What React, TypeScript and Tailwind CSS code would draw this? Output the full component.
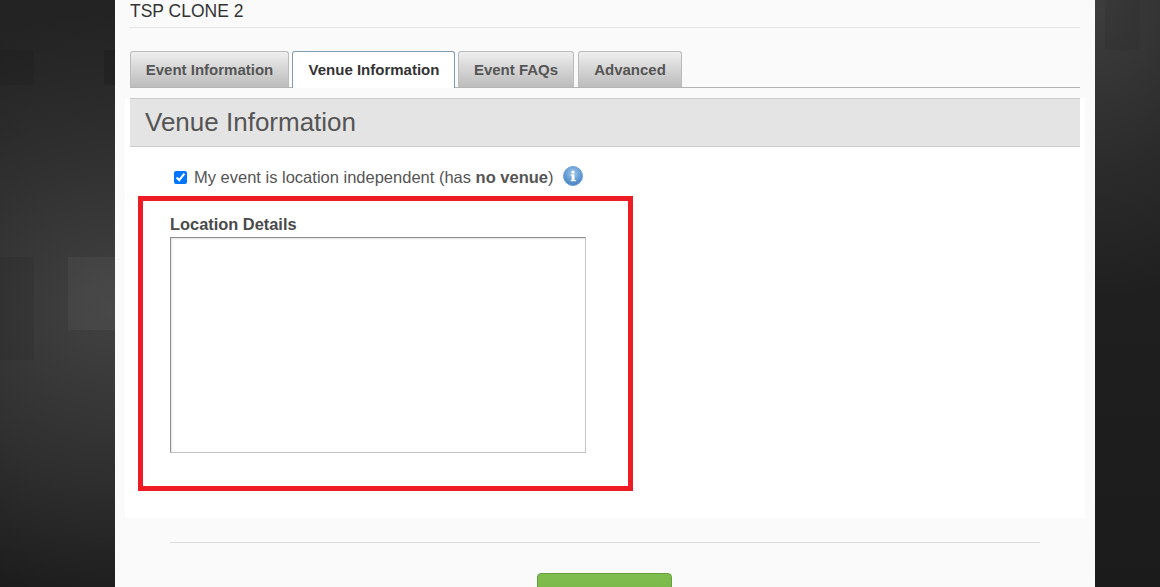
import React from 'react';

const tabs = [
  { label: 'Event Information', width: 'w-[159px]' },
  { label: 'Venue Information', width: 'w-[163px]', active: true },
  { label: 'Event FAQs', width: 'w-[116px]' },
  { label: 'Advanced', width: 'ml-[1px] w-[104px]' },
];

function InfoIcon() {
  return (
    <svg width="20" height="20" viewBox="0 0 20 20" className="block">
      <defs>
        <radialGradient id="infoBall" cx="50%" cy="35%" r="65%">
          <stop offset="0%" stopColor="#a5c9ec" />
          <stop offset="100%" stopColor="#3f80c4" />
        </radialGradient>
      </defs>
      <circle cx="10" cy="10" r="9.5" fill="url(#infoBall)" stroke="#6fa3d8" strokeWidth="1" />
      <rect x="8.7" y="8.5" width="2.8" height="6.5" fill="#fff" />
      <rect x="7.8" y="8.5" width="3" height="1.2" fill="#fff" />
      <rect x="7.8" y="14" width="5" height="1.2" fill="#fff" />
      <circle cx="10" cy="6" r="1.6" fill="#fff" />
    </svg>
  );
}

export default function App() {
  return (
    <div className="relative h-[587px] w-full overflow-hidden pl-[115px] font-['Liberation_Sans',Arial,sans-serif] [background:linear-gradient(#00000014,#00000014)_0_50px/34px_35px_no-repeat,linear-gradient(#00000024,#00000024)_104px_50px/11px_35px_no-repeat,linear-gradient(#00000014,#00000014)_0_257px/34px_103px_no-repeat,linear-gradient(#ffffff0a,#ffffff0a)_68px_257px/47px_73px_no-repeat,linear-gradient(#00000012,#00000012)_1105px_0/35px_50px_no-repeat,radial-gradient(ellipse_340px_300px_at_115px_310px,#424242_0%,#2f2f2f_55%,transparent_100%),radial-gradient(ellipse_220px_300px_at_1095px_0px,#3e3e3e_0%,#2a2a2a_60%,transparent_100%),linear-gradient(180deg,#232323_0%,#1b1b1b_100%)]">
      <div className="flex h-full w-[980px] flex-col bg-[#fafafa]">
        <div className="flex shrink-0 flex-col gap-[23px] px-[15px]">
          <div className="h-[28px] border-b border-[#e4e4e4] text-[17.5px] leading-[22px] text-[#333333]">TSP CLONE 2</div>
          <div className="flex h-[37px] gap-[3px] border-b border-[#b4b4b4]">
            {tabs.map((tab) =>
              tab.active ? (
                <div key={tab.label} className={`z-10 flex h-[37px] items-center justify-center rounded-t-[3px] border border-b-0 border-[#7f9db0] bg-white pt-[1px] pl-[1px] text-[15px] font-bold text-[#333333] ${tab.width}`}>
                  {tab.label}
                </div>
              ) : (
                <div key={tab.label} className={`flex h-[36px] items-center justify-center rounded-t-[3px] border border-b-0 border-[#bbbbbb] bg-gradient-to-b from-[#eeeeee] to-[#bcbcbc] pt-[2px] text-[15px] font-bold text-[#555555] ${tab.width}`}>
                  {tab.label}
                </div>
              )
            )}
          </div>
        </div>

        <div className="mx-[10px] mt-[10px] flex h-[420px] shrink-0 flex-col bg-white px-[5px]">
          <div className="flex h-[49px] shrink-0 items-center border-y border-[#cccccc] bg-[#e4e4e4] pl-[15px] text-[26px] text-[#555555]">Venue Information</div>
          <div className="flex flex-col pl-[40px] pt-[20px]">
            <div className="flex h-[20px] items-center pl-[4px] text-[16.5px] text-[#555555]">
              <input type="checkbox" defaultChecked className="m-0 h-[13px] w-[13px] accent-[#0075ff]" />
              <span className="ml-[7px]">My event is location independent (has <b>no venue</b>)</span>
              <span className="ml-[9px] -mt-[3px]"><InfoIcon /></span>
            </div>
            <label className="pt-[27px] text-[16.4px] font-bold leading-[20px] text-[#4a4a4a]">Location Details</label>
            <div className="mt-[3px] h-[216px] w-[416px] shrink-0 border border-[#c4c4c4] border-l-[#8f8f8f] border-t-[#8f8f8f] bg-white shadow-[inset_1px_1px_2px_rgba(0,0,0,0.12)]" />
          </div>
        </div>

        <div className="mx-[55px] mt-[24px] shrink-0 border-t border-[#dddddd]" />
        <div className="flex shrink-0 justify-center pr-[1px] pt-[30px]">
          <div className="h-[40px] w-[135px] shrink-0 rounded-[4px] border border-[#659f3e] bg-gradient-to-b from-[#7fbe4e] to-[#74b344]" />
        </div>
      </div>

      {/* red annotation drawn over the screenshot */}
      <div className="absolute left-[138px] top-[196px] h-[295px] w-[495px] border-[5px] border-[#ed1c24]" />
    </div>
  );
}
